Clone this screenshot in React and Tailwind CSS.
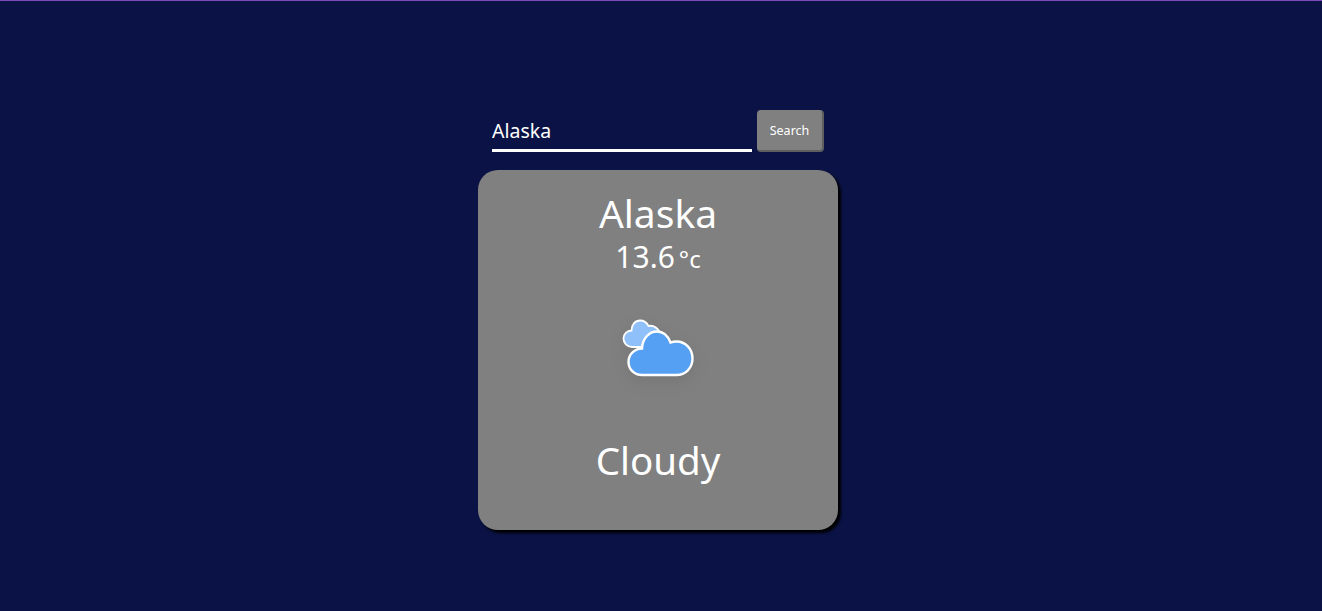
import React, { useState } from 'react';

const CloudIcon = () => (
  <svg width="76" height="62" viewBox="0 0 76 62" className="drop-shadow-[0_5px_8px_rgba(0,0,0,0.08)]">
    <path
      d="M12 31 C7 31 3.500 27 3.500 22.500 C3.500 18 7 14.500 11.500 14.500 C11.500 9 15 4.500 20 4.500 C24 4.500 27 7 28.500 10 C33 9 37 11.500 40 16 L30 31 Z"
      fill="#90c0fa"
      stroke="#ffffff"
      strokeWidth="1.8"
    />
    <path
      d="M22 59 C14 59 8.500 53 8.500 46 C8.500 38.500 14 33 22 32.500 C22.500 22.500 29 15.500 37 15.500 C43.500 15.500 48 20 50.500 26.500 C52.500 25.800 54.500 25.500 56.500 25.500 C65.500 25.500 72.500 33 72.500 42.500 C72.500 52 65.500 59 56.500 59 Z"
      fill="#55a0f2"
      stroke="#ffffff"
      strokeWidth="2.400"
    />
  </svg>
);

export default function App() {
  const [city, setCity] = useState('Alaska');

  return (
    <div className="min-h-[611px] bg-[#0b1346] border-t border-[#7b4bb8] pr-[6px] flex justify-center font-['Noto_Sans',sans-serif] text-white">
      <div className="w-[360px] pt-[109px]">
        <div className="flex items-start pl-[14px] gap-[5px]">
          <input
            value={city}
            onChange={(e) => setCity(e.target.value)}
            className="w-[260px] h-[42px] pt-[1px] bg-transparent border-b-[3px] border-white text-[19.500px] text-white outline-none"
          />
          <button className="w-[67px] h-[42px] pt-[2px] rounded-[4px] bg-[#808080] border-b-2 border-r-2 border-[#5f5f5f] text-[12.500px] text-white">
            Search
          </button>
        </div>
        <div className="mt-[18px] h-[360px] rounded-[20px] bg-[#808080] shadow-[3px_3px_3px_#000] flex flex-col items-center">
          <h1 className="mt-[18px] text-[39px] leading-[50px]">Alaska</h1>
          <p className="text-[30px] leading-[38px] flex items-baseline">
            13.6<span className="ml-1 text-[24px]">°c</span>
          </p>
          <div className="mt-[38px] mr-[1px]">
            <CloudIcon />
          </div>
          <p className="mt-[56px] text-[38.500px] leading-[52px]">Cloudy</p>
        </div>
      </div>
    </div>
  );
}
